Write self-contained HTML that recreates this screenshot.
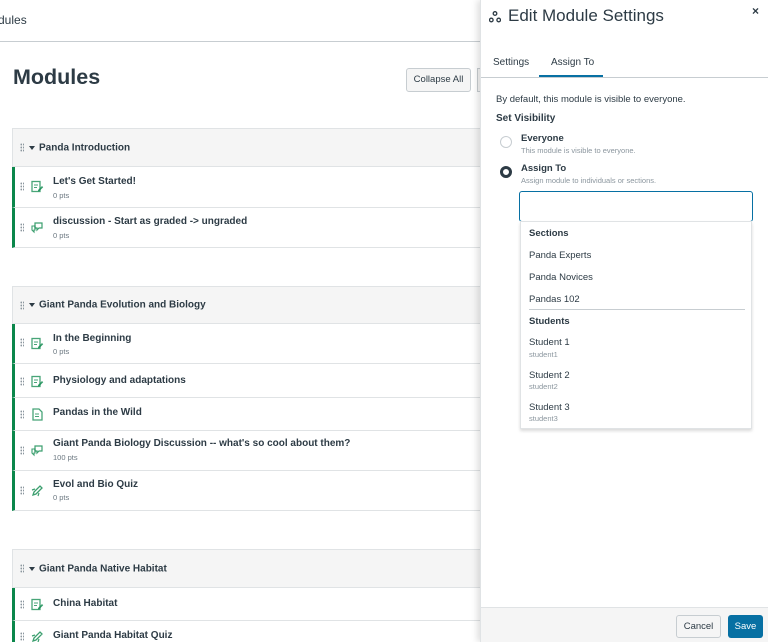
<!DOCTYPE html>
<html><head><meta charset="utf-8"><style>
*{margin:0;padding:0;box-sizing:border-box}
html,body{width:768px;height:642px;overflow:hidden}
body{position:relative;background:#fff;font-family:"Liberation Sans",sans-serif;color:#2d3b45}
.a{position:absolute;white-space:nowrap}
.mh{position:absolute;left:12px;width:480px;background:#f5f5f5;border:1px solid #e0e3e5;font-size:10px;font-weight:bold;color:#2d3b45}
.mh span{position:absolute;left:26px;top:50%;transform:translateY(-50%)}
.it{position:absolute;left:12px;width:480px;background:#fff;border-left:3px solid #0b874b;border-bottom:1px solid #e0e3e5}
.it .t{position:absolute;left:38px;font-size:10px;font-weight:bold;color:#2d3b45}
.it .p{position:absolute;left:38px;font-size:7.5px;color:#6b7780}
.dr{position:absolute;width:4px;height:9px;background-image:radial-gradient(circle,#8b969e 0.8px,transparent 1px);background-size:2.5px 3px}
.ic{position:absolute;left:16px}
.tri{position:absolute;left:16px;top:50%;margin-top:-2px;border:3px solid transparent;border-top:4px solid #2d3b45}
.dd div{position:absolute;left:8px;font-size:9.5px;color:#2d3b45}
.dd .s{font-size:7.5px;color:#8b969e}
</style></head><body>
<svg width="0" height="0" style="position:absolute"><defs>
<g id="asg"><rect x="1" y="1.5" width="8" height="10" fill="none" stroke="#0b874b" stroke-width="1.3" opacity=".75"/><path d="M3 5h4M3 7.5h3" stroke="#0b874b" stroke-width="1" opacity=".75"/><path d="M7 10l4-4 1.2 1.2-4 4H7z" fill="#0b874b" opacity=".8"/></g>
<g id="dis"><path d="M4 2h7v5H8l-2 2V7H4z" fill="none" stroke="#0b874b" stroke-width="1.2" opacity=".8"/><path d="M1 5h3v4h-1v2l-2-2z" fill="none" stroke="#0b874b" stroke-width="1.1" opacity=".8"/></g>
<g id="pg"><path d="M2 1h6l3 3v8H2z" fill="none" stroke="#0b874b" stroke-width="1.3" opacity=".75"/><path d="M4 6h4M4 8.5h4" stroke="#0b874b" stroke-width="1" opacity=".75"/></g>
<g id="qz"><path d="M2 11l3-1 6-6-2-2-6 6z" fill="none" stroke="#0b874b" stroke-width="1.3" opacity=".8"/><path d="M1 6l3-1M7 12l1-3" stroke="#0b874b" stroke-width="1.2" opacity=".8"/></g>
</defs></svg>
<div class="a" style="left:-2px;top:13px;font-size:12px;color:#2d3b45">dules</div>
<div class="a" style="left:0;top:41px;width:480px;height:1px;background:#c7cdd1"></div>
<div class="a" style="left:13px;top:65px;font-size:21.5px;font-weight:bold;color:#2d3b45">Modules</div>
<div class="a" style="left:406px;top:68px;width:65px;height:24px;background:#f5f5f5;border:1px solid #c7cdd1;border-radius:3px;font-size:9.5px;text-align:center;line-height:22px">Collapse All</div>
<div class="a" style="left:477px;top:68px;width:5px;height:24px;background:#f5f5f5;border:1px solid #c7cdd1"></div>

<div class="mh" style="top:128px;height:39px"><i class="dr" style="left:7px;top:14px"></i><i class="tri"></i><span>Panda Introduction</span></div>
<div class="it" style="top:167px;height:41px"><i class="dr" style="left:5px;top:15px"></i><svg class="ic" style="top:13px" width="13" height="13"><use href="#asg"/></svg><div class="t" style="top:9px">Let's Get Started!</div><div class="p" style="top:24px">0 pts</div></div>
<div class="it" style="top:208px;height:40px"><i class="dr" style="left:5px;top:15px"></i><svg class="ic" style="top:13px" width="13" height="13"><use href="#dis"/></svg><div class="t" style="top:8px">discussion - Start as graded -&gt; ungraded</div><div class="p" style="top:23px">0 pts</div></div>

<div class="mh" style="top:286px;height:38px"><i class="dr" style="left:7px;top:14px"></i><i class="tri"></i><span>Giant Panda Evolution and Biology</span></div>
<div class="it" style="top:324px;height:40px"><i class="dr" style="left:5px;top:14px"></i><svg class="ic" style="top:13px" width="13" height="13"><use href="#asg"/></svg><div class="t" style="top:9px">In the Beginning</div><div class="p" style="top:23px">0 pts</div></div>
<div class="it" style="top:364px;height:34px"><i class="dr" style="left:5px;top:13px"></i><svg class="ic" style="top:11px" width="13" height="13"><use href="#asg"/></svg><div class="t" style="top:11px">Physiology and adaptations</div></div>
<div class="it" style="top:398px;height:33px"><i class="dr" style="left:5px;top:12px"></i><svg class="ic" style="top:10px" width="13" height="13"><use href="#pg"/></svg><div class="t" style="top:9px">Pandas in the Wild</div></div>
<div class="it" style="top:431px;height:40px"><i class="dr" style="left:5px;top:15px"></i><svg class="ic" style="top:13px" width="13" height="13"><use href="#dis"/></svg><div class="t" style="top:7px">Giant Panda Biology Discussion -- what's so cool about them?</div><div class="p" style="top:22px">100 pts</div></div>
<div class="it" style="top:471px;height:40px"><i class="dr" style="left:5px;top:15px"></i><svg class="ic" style="top:13px" width="13" height="13"><use href="#qz"/></svg><div class="t" style="top:8px">Evol and Bio Quiz</div><div class="p" style="top:22px">0 pts</div></div>

<div class="mh" style="top:549px;height:39px"><i class="dr" style="left:7px;top:14px"></i><i class="tri"></i><span>Giant Panda Native Habitat</span></div>
<div class="it" style="top:588px;height:33px"><i class="dr" style="left:5px;top:12px"></i><svg class="ic" style="top:10px" width="13" height="13"><use href="#asg"/></svg><div class="t" style="top:10px">China Habitat</div></div>
<div class="it" style="top:621px;height:30px;border-bottom:none"><i class="dr" style="left:5px;top:11px"></i><svg class="ic" style="top:9px" width="13" height="13"><use href="#qz"/></svg><div class="t" style="top:9px">Giant Panda Habitat Quiz</div></div>

<div class="a" style="left:480px;top:0;width:288px;height:642px;background:#fff;box-shadow:-3px 0 6px rgba(0,0,0,.12);border-left:1px solid #e0e3e5">
  <svg class="a" style="left:8px;top:11px" width="12" height="12" viewBox="0 0 12 12"><circle cx="6" cy="2.5" r="1.8" fill="none" stroke="#2d3b45" stroke-width="1.3"/><circle cx="2.3" cy="9" r="1.8" fill="none" stroke="#2d3b45" stroke-width="1.3"/><circle cx="9.7" cy="9" r="1.8" fill="none" stroke="#2d3b45" stroke-width="1.3"/></svg>
  <div class="a" style="left:27px;top:6px;font-size:17px;color:#2d3b45">Edit Module Settings</div>
  <div class="a" style="left:271px;top:4px;font-size:12px;font-weight:bold">×</div>
  <div class="a" style="left:12px;top:57px;font-size:10px">Settings</div>
  <div class="a" style="left:70px;top:57px;font-size:10px">Assign To</div>
  <div class="a" style="left:0;top:77px;width:288px;height:1px;background:#c7cdd1"></div>
  <div class="a" style="left:58px;top:75px;width:64px;height:2px;background:#0770a3"></div>
  <div class="a" style="left:15px;top:94px;font-size:9.5px">By default, this module is visible to everyone.</div>
  <div class="a" style="left:15px;top:113px;font-size:10px;font-weight:bold">Set Visibility</div>
  <div class="a" style="left:19px;top:136px;width:12px;height:12px;border:1px solid #c7cdd1;border-radius:50%"></div>
  <div class="a" style="left:40px;top:133px;font-size:9.5px;font-weight:bold">Everyone</div>
  <div class="a" style="left:40px;top:146px;font-size:7.5px;color:#8b969e">This module is visible to everyone.</div>
  <div class="a" style="left:19px;top:166px;width:12px;height:12px;border:3.5px solid #2d3b45;border-radius:50%"></div>
  <div class="a" style="left:40px;top:163px;font-size:9.5px;font-weight:bold">Assign To</div>
  <div class="a" style="left:40px;top:176px;font-size:7.5px;color:#8b969e">Assign module to individuals or sections.</div>
  <div class="a" style="left:38px;top:191px;width:234px;height:31px;border:1.5px solid #0770a3;border-radius:3px"></div>
  <div class="a dd" style="left:39px;top:221px;width:232px;height:208px;background:#fff;border:1px solid #e0e3e5;box-shadow:0 2px 3px rgba(0,0,0,.15)">
    <div style="top:6px;font-weight:bold">Sections</div>
    <div style="top:28px">Panda Experts</div>
    <div style="top:50px">Panda Novices</div>
    <div style="top:72px">Pandas 102</div>
    <div style="top:87px;left:8px;width:216px;height:1px;background:#c7cdd1"></div>
    <div style="top:94px;font-weight:bold">Students</div>
    <div style="top:115px">Student 1</div><div class="s" style="top:128px">student1</div>
    <div style="top:148px">Student 2</div><div class="s" style="top:160px">student2</div>
    <div style="top:180px">Student 3</div><div class="s" style="top:192px">student3</div>
  </div>
  <div class="a" style="left:0;top:607px;width:288px;height:35px;background:#f5f5f5;border-top:1px solid #e0e3e5"></div>
  <div class="a" style="left:195px;top:615px;width:45px;height:23px;background:#f5f5f5;border:1px solid #c7cdd1;border-radius:3px;font-size:9.5px;text-align:center;line-height:21px">Cancel</div>
  <div class="a" style="left:247px;top:615px;width:35px;height:23px;background:#0770a3;border-radius:3px;font-size:9.5px;color:#fff;text-align:center;line-height:23px">Save</div>
</div>
</body></html>
